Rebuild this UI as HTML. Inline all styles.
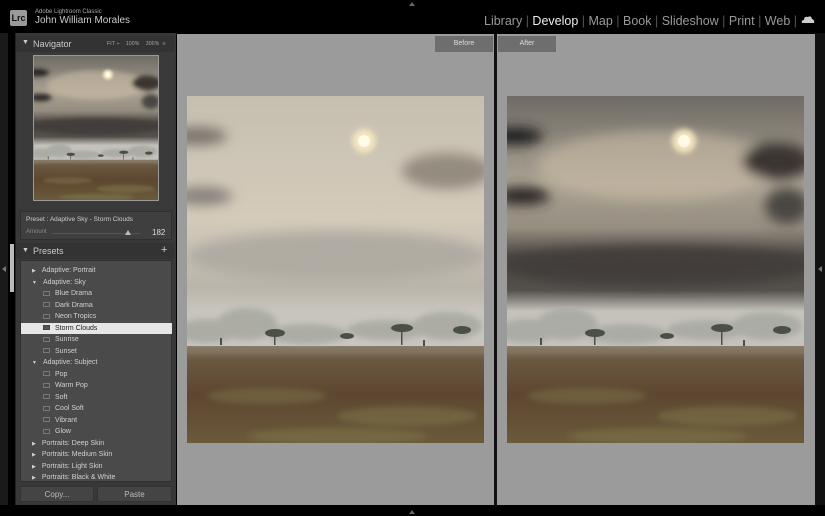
<!DOCTYPE html>
<html><head><meta charset="utf-8"><style>
*{margin:0;padding:0;box-sizing:border-box}
body{width:825px;height:516px;background:#000;position:relative;overflow:hidden;font-family:"Liberation Sans",sans-serif;color:#ccc}
.a{position:absolute}
.nav span{color:#a9a9a9}
.li{position:absolute;left:0;width:151px;height:11px;font-size:7px;line-height:11px;color:#d0d0d0}
.ic{display:inline-block;width:7px;height:5px;border:1px solid #777;vertical-align:middle;margin-right:5px}
.btn{position:absolute;top:486px;height:16px;background:#444;border:1px solid #333;color:#bbb;font-size:8px;line-height:15px;text-align:center}
</style></head><body>
<div class="a" style="left:10px;top:10px;width:17px;height:16px;background:#9a9a9a;border-radius:2px;color:#111;font-size:9px;font-weight:bold;line-height:16px;text-align:center">Lrc</div>
<div class="a" style="left:35px;top:9px;font-size:6px;color:#aaa">Adobe Lightroom Classic</div>
<div class="a" style="left:35px;top:15px;font-size:10px;color:#ccc">John William Morales</div>
<div class="a" style="left:409px;top:2px;width:0;height:0;border-left:3px solid transparent;border-right:3px solid transparent;border-bottom:4px solid #666"></div>
<div class="a nav" style="right:28px;top:14px;font-size:12.5px;color:#999;white-space:nowrap">Library <span style="color:#555">|</span> <b style="color:#eee;font-weight:normal">Develop</b> <span style="color:#555">|</span> Map <span style="color:#555">|</span> Book <span style="color:#555">|</span> Slideshow <span style="color:#555">|</span> Print <span style="color:#555">|</span> Web <span style="color:#555">|</span></div>
<svg class="a" style="left:801px;top:15px" width="14" height="9"><path d="M1 8 Q0 5 3 5 Q3 1 7 2 Q10 0 11 4 Q14 5 13 8 Z" fill="#ccc"/></svg>

<div class="a" style="left:0;top:33px;width:8px;height:472px;background:#1a1a1a"></div>
<div class="a" style="left:2px;top:266px;width:0;height:0;border-top:3px solid transparent;border-bottom:3px solid transparent;border-right:4px solid #777"></div>
<div class="a" style="left:10px;top:244px;width:4px;height:48px;background:#bbb"></div>
<div class="a" style="left:15px;top:33px;width:161px;height:472px;background:#383838;border-left:1px solid #222"></div>

<div class="a" style="left:16px;top:36px;width:158px;height:16px;background:#333"></div>
<div class="a" style="left:22px;top:39px;font-size:7px;color:#ccc">▼</div>
<div class="a" style="left:33px;top:39px;font-size:9px;color:#ccc">Navigator</div>
<div class="a" style="left:107px;top:41px;font-size:5px;color:#aaa;letter-spacing:.2px">FIT ÷ &nbsp;&nbsp;&nbsp;100% &nbsp;&nbsp;&nbsp;300% &nbsp;≡</div>
<div class="a" style="left:17px;top:53px;width:156px;height:156px;background:#3a3a3a"></div>
<div class="a" style="left:33px;top:55px;width:126px;height:146px;border:1px solid #999;overflow:hidden">
<svg width="124" height="144" viewBox="0 0 297 347" preserveAspectRatio="none"><use href="#after"/></svg></div>

<div class="a" style="left:20px;top:211px;width:152px;height:29px;background:#3f3f3f;border:1px solid #2f2f2f"></div>
<div class="a" style="left:26px;top:216px;font-size:6.5px;color:#ccc">Preset : Adaptive Sky - Storm Clouds</div>
<div class="a" style="left:26px;top:229px;font-size:6px;color:#888">Amount</div>
<div class="a" style="left:52px;top:233px;width:88px;height:1px;background:#555"></div>
<div class="a" style="left:125px;top:230px;width:0;height:0;border-left:3px solid transparent;border-right:3px solid transparent;border-bottom:5px solid #bbb"></div>
<div class="a" style="left:152px;top:228px;font-size:8px;color:#ddd">182</div>

<div class="a" style="left:16px;top:243px;width:158px;height:16px;background:#333"></div>
<div class="a" style="left:22px;top:247px;font-size:7px;color:#ccc">▼</div>
<div class="a" style="left:33px;top:246px;font-size:9px;color:#ccc">Presets</div>
<div class="a" style="left:161px;top:244px;font-size:11px;color:#ccc">+</div>
<div class="a" style="left:20px;top:260px;width:152px;height:222px;background:#4a4a4a;border:1px solid #2f2f2f">
<div class="li" style="top:4px;padding-left:11px"><span style="font-size:5px;margin-right:6px">▶</span>Adaptive: Portrait</div>
<div class="li" style="top:15.5px;padding-left:11px"><span style="font-size:5px;margin-right:6px">▼</span>Adaptive: Sky</div>
<div class="li" style="top:27px;padding-left:22px"><i class="ic"></i>Blue Drama</div>
<div class="li" style="top:38.5px;padding-left:22px"><i class="ic"></i>Dark Drama</div>
<div class="li" style="top:50px;padding-left:22px"><i class="ic"></i>Neon Tropics</div>
<div class="li" style="top:61.5px;padding-left:22px;background:#e6e6e6;color:#222"><i class="ic" style="background:#555;border-color:#444"></i>Storm Clouds</div>
<div class="li" style="top:73px;padding-left:22px"><i class="ic"></i>Sunrise</div>
<div class="li" style="top:84.5px;padding-left:22px"><i class="ic"></i>Sunset</div>
<div class="li" style="top:96px;padding-left:11px"><span style="font-size:5px;margin-right:6px">▼</span>Adaptive: Subject</div>
<div class="li" style="top:107.5px;padding-left:22px"><i class="ic"></i>Pop</div>
<div class="li" style="top:119px;padding-left:22px"><i class="ic"></i>Warm Pop</div>
<div class="li" style="top:130.5px;padding-left:22px"><i class="ic"></i>Soft</div>
<div class="li" style="top:142px;padding-left:22px"><i class="ic"></i>Cool Soft</div>
<div class="li" style="top:153.5px;padding-left:22px"><i class="ic"></i>Vibrant</div>
<div class="li" style="top:165px;padding-left:22px"><i class="ic"></i>Glow</div>
<div class="li" style="top:176.5px;padding-left:11px"><span style="font-size:5px;margin-right:6px">▶</span>Portraits: Deep Skin</div>
<div class="li" style="top:188px;padding-left:11px"><span style="font-size:5px;margin-right:6px">▶</span>Portraits: Medium Skin</div>
<div class="li" style="top:199.5px;padding-left:11px"><span style="font-size:5px;margin-right:6px">▶</span>Portraits: Light Skin</div>
<div class="li" style="top:211px;padding-left:11px"><span style="font-size:5px;margin-right:6px">▶</span>Portraits: Black &amp; White</div>
</div>
<div class="btn" style="left:20px;width:74px">Copy...</div>
<div class="btn" style="left:97px;width:75px">Paste</div>

<div class="a" style="left:177px;top:34px;width:638px;height:471px;background:#9b9b9b"></div>
<div class="a" style="left:494px;top:34px;width:3px;height:471px;background:#111"></div>
<div class="a" style="left:435px;top:36px;width:58px;height:16px;background:#6e6e6e;color:#ddd;font-size:7px;line-height:16px;text-align:center">Before</div>
<div class="a" style="left:498px;top:36px;width:58px;height:16px;background:#6e6e6e;color:#ddd;font-size:7px;line-height:16px;text-align:center">After</div>
<div class="a" style="left:815px;top:33px;width:10px;height:472px;background:#111"></div>
<div class="a" style="left:818px;top:266px;width:0;height:0;border-top:3px solid transparent;border-bottom:3px solid transparent;border-right:4px solid #777"></div>
<div class="a" style="left:409px;top:510px;width:0;height:0;border-left:3px solid transparent;border-right:3px solid transparent;border-bottom:4px solid #666"></div>

<svg class="a" style="left:187px;top:96px" width="297" height="347">
<defs>
<filter id="b6" x="-50%" y="-50%" width="200%" height="200%"><feGaussianBlur stdDeviation="6"/></filter>
<filter id="b3" x="-50%" y="-50%" width="200%" height="200%"><feGaussianBlur stdDeviation="3"/></filter>
<linearGradient id="gb" x1="0" y1="0" x2="0" y2="1"><stop offset="0" stop-color="#c6bfb0"/><stop offset=".35" stop-color="#d4cbba"/><stop offset=".55" stop-color="#bab5ab"/><stop offset=".62" stop-color="#c8c5bd"/></linearGradient>
<linearGradient id="ga" x1="0" y1="0" x2="0" y2="1"><stop offset="0" stop-color="#6f6b65"/><stop offset=".25" stop-color="#aaa292"/><stop offset=".38" stop-color="#958d80"/><stop offset=".46" stop-color="#4d4944"/><stop offset=".56" stop-color="#55514c"/><stop offset=".62" stop-color="#c5c2bb"/></linearGradient>
<linearGradient id="gg" x1="0" y1="0" x2="0" y2="1"><stop offset="0" stop-color="#8a7c6a"/><stop offset=".15" stop-color="#6a5840"/><stop offset=".5" stop-color="#5e4630"/><stop offset="1" stop-color="#6a5a3a"/></linearGradient>
<g id="ground">
<rect y="250" width="297" height="97" fill="url(#gg)"/>
<g filter="url(#b3)" fill="#a9aaa3" opacity=".9"><ellipse cx="20" cy="235" rx="30" ry="12"/><ellipse cx="60" cy="228" rx="30" ry="16"/><ellipse cx="120" cy="238" rx="40" ry="10"/><ellipse cx="200" cy="234" rx="40" ry="10"/><ellipse cx="260" cy="230" rx="35" ry="14"/></g>
<g fill="#4b5046"><ellipse cx="88" cy="237" rx="10" ry="4"/><ellipse cx="160" cy="240" rx="7" ry="3"/><ellipse cx="215" cy="232" rx="11" ry="4"/><ellipse cx="275" cy="234" rx="9" ry="4"/><rect x="87" y="237" width="1.5" height="12"/><rect x="214" y="232" width="1.5" height="17"/><rect x="33" y="242" width="2" height="7"/><rect x="236" y="244" width="2" height="6"/></g>
<rect y="253" width="297" height="5" fill="#857663" opacity=".6"/>
<g filter="url(#b3)" opacity=".35" fill="#8a8a55"><ellipse cx="80" cy="300" rx="60" ry="8"/><ellipse cx="220" cy="320" rx="70" ry="10"/><ellipse cx="150" cy="340" rx="90" ry="8"/></g>
</g>
<g id="before">
<rect width="297" height="347" fill="url(#gb)"/>
<g filter="url(#b6)"><ellipse cx="10" cy="40" rx="30" ry="9" fill="#7a756d"/><ellipse cx="15" cy="100" rx="30" ry="9" fill="#85807a"/><ellipse cx="260" cy="75" rx="45" ry="18" fill="#948c80"/><ellipse cx="150" cy="160" rx="150" ry="25" fill="#b0aca3"/></g>
<circle cx="177" cy="45" r="12" fill="#f5e6c0" filter="url(#b3)"/><circle cx="177" cy="45" r="6" fill="#fffbe8"/>
<use href="#ground"/>
</g>
<g id="after">
<rect width="297" height="347" fill="url(#ga)"/>
<g filter="url(#b6)"><ellipse cx="150" cy="70" rx="120" ry="35" fill="#c9bba5" opacity=".6"/><ellipse cx="8" cy="40" rx="28" ry="9" fill="#222"/><ellipse cx="15" cy="100" rx="28" ry="9" fill="#2a2826"/><ellipse cx="270" cy="65" rx="35" ry="18" fill="#3a3632"/><ellipse cx="280" cy="110" rx="22" ry="18" fill="#4a4642"/><ellipse cx="150" cy="170" rx="160" ry="20" fill="#423e3a"/></g>
<circle cx="177" cy="45" r="12" fill="#f5e6c0" filter="url(#b3)"/><circle cx="177" cy="45" r="6" fill="#fffbe8"/>
<use href="#ground"/>
</g>
</defs>
<use href="#before"/>
</svg>
<svg class="a" style="left:507px;top:96px" width="297" height="347"><use href="#after"/></svg>
</body></html>
